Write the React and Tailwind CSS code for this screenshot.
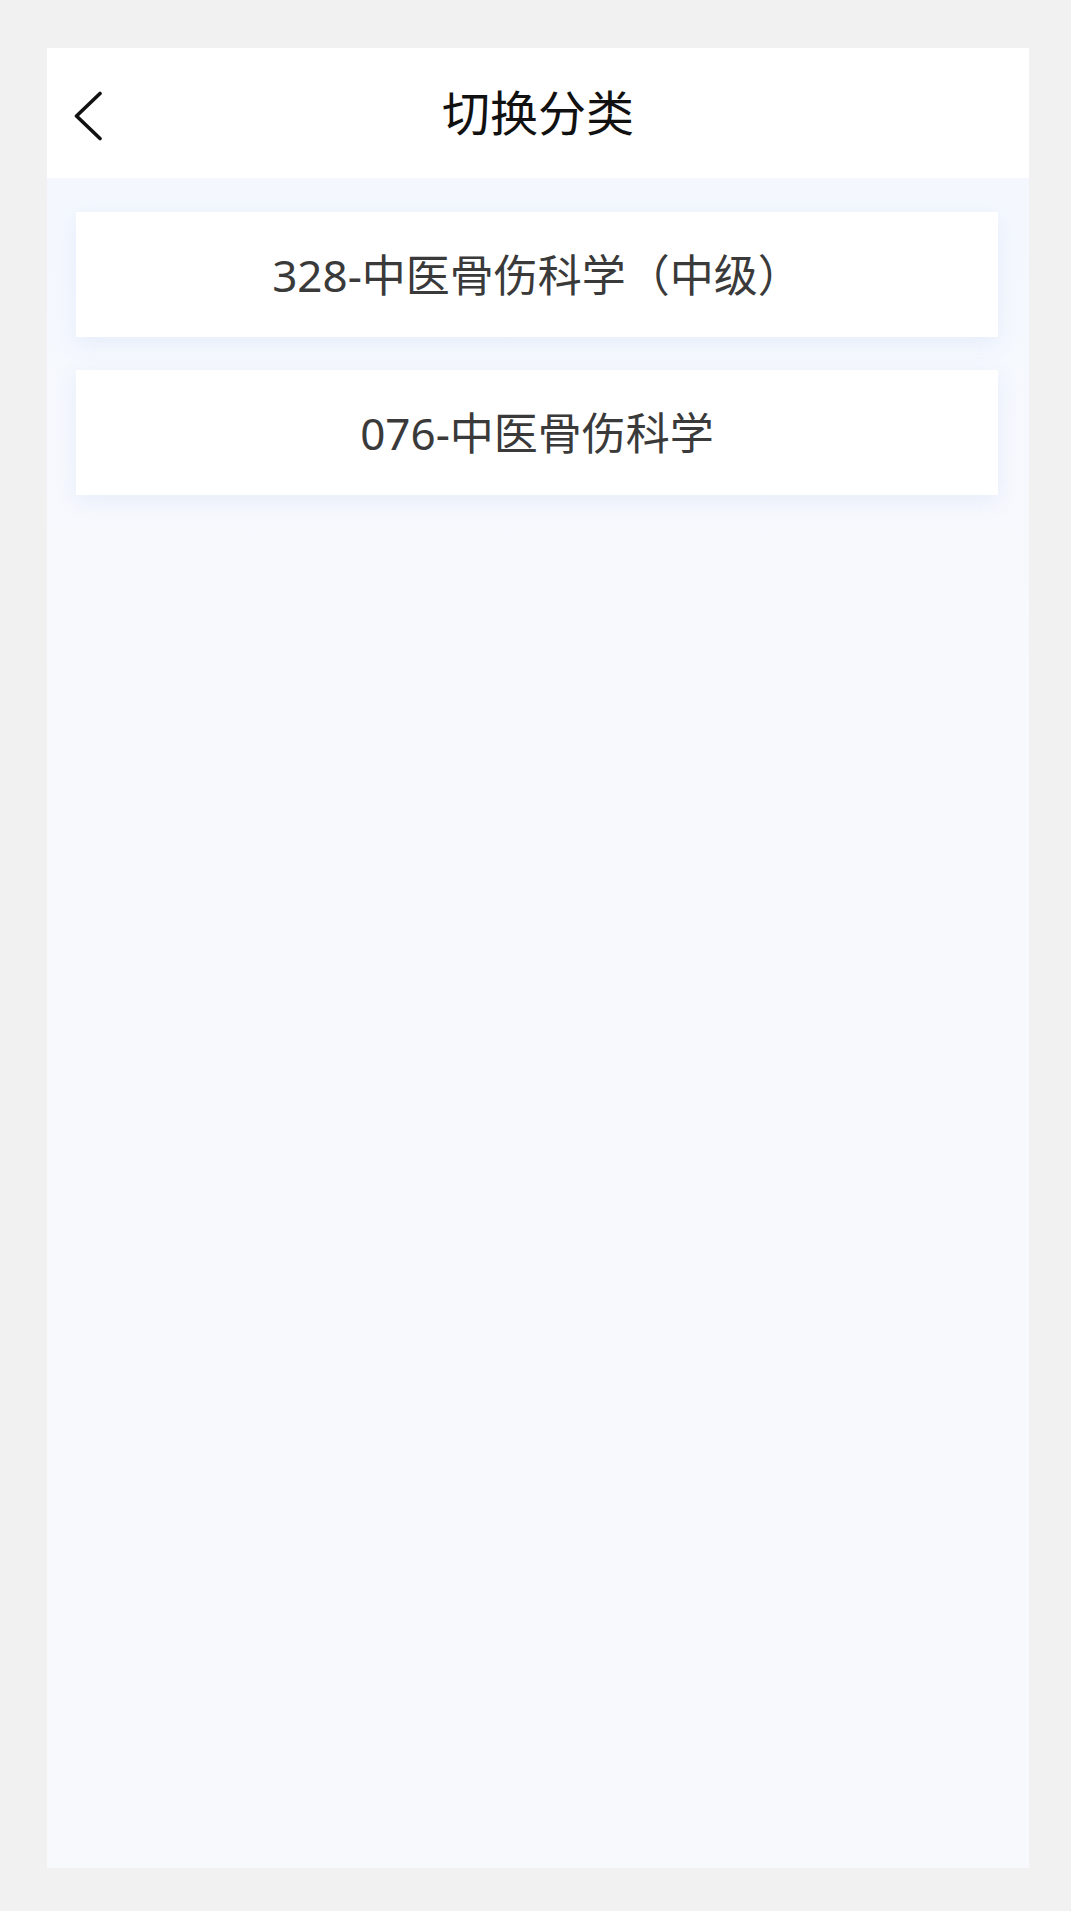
import React from 'react';

const categories = ['328-中医骨伤科学（中级）', '076-中医骨伤科学'];

export default function App() {
  return (
    <div
      className="min-h-[1911px] bg-[#f1f1f1] pt-[48px] pl-[47px] pr-[42px] pb-[43px]"
      style={{ fontFamily: '"Noto Sans", "Noto Sans CJK SC", sans-serif' }}
    >
      <div className="flex h-[1820px] flex-col bg-[#f8f9fd]">
        {/* Header */}
        <div className="relative flex h-[130px] items-center justify-center bg-white">
          <button className="absolute left-[24px] top-[43px] flex h-[50px] w-[36px] items-center">
            <svg width="32" height="50" viewBox="0 0 32 50" fill="none">
              <path
                d="M29 2.5 L5.5 25 L29 47.5"
                stroke="#111"
                strokeWidth="3.6"
                strokeLinecap="round"
                strokeLinejoin="round"
              />
            </svg>
          </button>
          <h1 className="-mt-[1px] text-[48px] font-normal leading-none text-[#111]">切换分类</h1>
        </div>

        {/* List */}
        <div className="flex flex-1 flex-col gap-[33px] bg-gradient-to-b from-[#f4f8fe] to-[#f8f9fd] to-[30%] pl-[29px] pr-[31px] pt-[34px]">
          {categories.map((c) => (
            <div
              key={c}
              className="flex h-[125px] items-center justify-center bg-white shadow-[0_6px_20px_rgba(120,160,230,0.12)]"
            >
              <span className="text-[44px] leading-none text-[#3a3a3a]">{c}</span>
            </div>
          ))}
        </div>
      </div>
    </div>
  );
}
